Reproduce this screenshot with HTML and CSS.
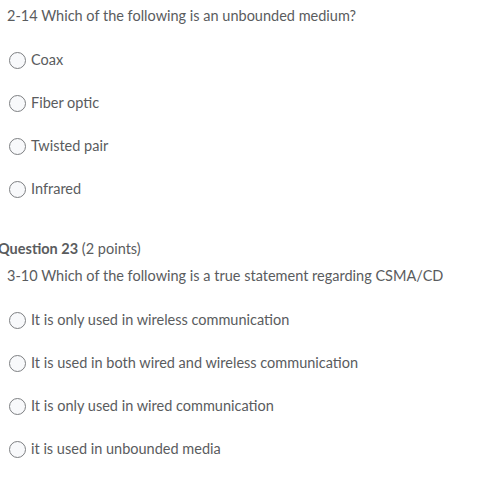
FILE: index.html
```html
<!DOCTYPE html>
<html>
<head>
<meta charset="utf-8">
<link rel="stylesheet" href="styles.css">
</head>
<body>
<div class="page">
  <div class="qtext first">2-14 Which of the following is an unbounded medium?</div>
  <div class="options">
    <label class="opt"><span class="radio"></span><span>Coax</span></label>
    <label class="opt"><span class="radio"></span><span>Fiber optic</span></label>
    <label class="opt"><span class="radio"></span><span>Twisted pair</span></label>
    <label class="opt"><span class="radio"></span><span>Infrared</span></label>
  </div>
  <div class="qhead"><b>Question 23</b> (2 points)</div>
  <div class="qtext second">3-10 Which of the following is a true statement regarding CSMA/CD</div>
  <div class="options second-opts">
    <label class="opt"><span class="radio"></span><span>It is only used in wireless communication</span></label>
    <label class="opt"><span class="radio"></span><span>It is used in both wired and wireless communication</span></label>
    <label class="opt"><span class="radio"></span><span>It is only used in wired communication</span></label>
    <label class="opt"><span class="radio"></span><span>it is used in unbounded media</span></label>
  </div>
</div>
</body>
</html>
```
FILE: styles.css
```css
html, body {
  margin: 0;
  padding: 0;
  background: #ffffff;
}
.page {
  font-family: Lato, "Noto Sans", sans-serif;
  font-size: 14.5px;
  line-height: 20px;
  color: #5a5c5e;
  padding-top: 6px;
}
.qtext {
  padding-left: 7px;
}
.options {
  display: flex;
  flex-direction: column;
  gap: 23px;
  margin-top: 24px;
  padding-left: 9px;
}
.opt {
  display: flex;
  align-items: center;
  height: 20px;
}
.radio {
  box-sizing: border-box;
  width: 17px;
  height: 17px;
  border: 1px solid #7d7f82;
  border-radius: 50%;
  background: #f8f9fb;
  margin-right: 5px;
  flex: none;
}
.qhead {
  margin-top: 40px;
  margin-left: -2px;
}
.qhead b {
  font-weight: 700;
}
.qtext.second {
  margin-top: 7px;
}
.second-opts {
  margin-top: 24px;
}
```
